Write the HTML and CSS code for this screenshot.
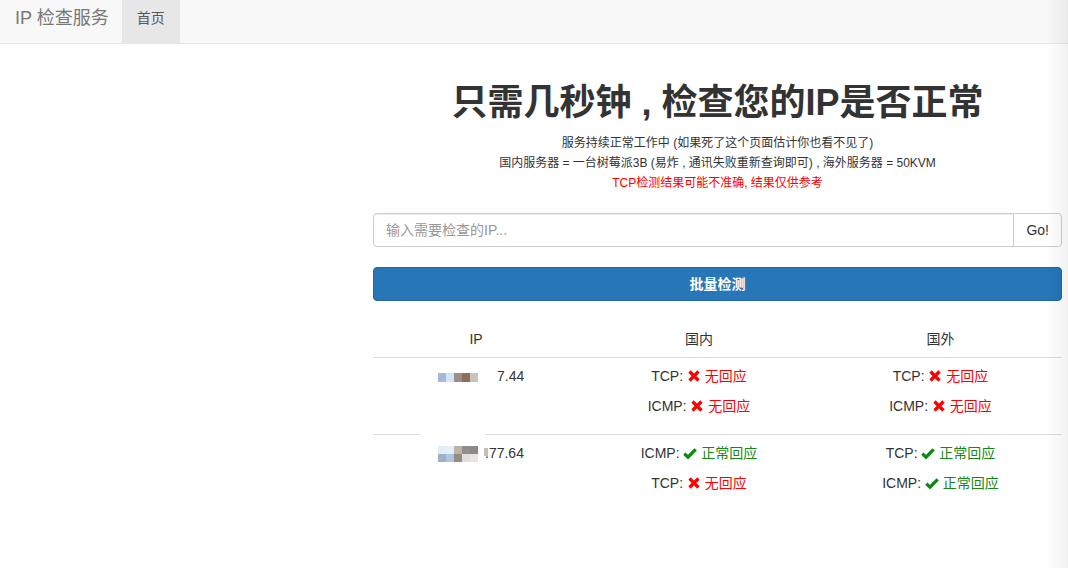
FILE: index.html
```html
<!DOCTYPE html>
<html lang="zh-CN">
<head>
<meta charset="utf-8">
<title>IP 检查服务</title>
<link rel="stylesheet" href="styles.css">
</head>
<body>
<nav class="navbar">
  <a class="brand">IP 检查服务</a>
  <ul class="nav">
    <li class="active"><a>首页</a></li>
  </ul>
</nav>

<main class="page">
  <section class="content">
    <h1 class="title">只需几秒钟 , 检查您的IP是否正常</h1>
    <div class="intro">
      <p>服务持续正常工作中 (如果死了这个页面估计你也看不见了)</p>
      <p>国内服务器 = 一台树莓派3B (易炸 , 通讯失败重新查询即可) , 海外服务器 = 50KVM</p>
      <p class="warn">TCP检测结果可能不准确, 结果仅供参考</p>
    </div>

    <div class="input-group">
      <input class="ip-input" type="text" placeholder="输入需要检查的IP...">
      <button class="go-btn" type="button">Go!</button>
    </div>

    <button class="batch-btn" type="button">批量检测</button>

    <table class="result">
      <colgroup>
        <col class="c-ip"><col class="c-cn"><col class="c-ov">
      </colgroup>
      <thead>
        <tr><th>IP</th><th>国内</th><th>国外</th></tr>
      </thead>
      <tbody>
        <tr>
          <td class="ip">
            <div class="ipcell">
              <span class="mosaic m1">
                <i style="background:#a4b8dc"></i><i style="background:#d4e4f4"></i><i style="background:#9c8e88"></i><i style="background:#8c705c"></i><i style="background:#c8c4bc"></i>
              </span><span class="tail t1">7.44</span>
            </div>
          </td>
          <td>
            <p>TCP: <svg class="ico" viewBox="0 0 14 14"><path class="x" d="M2.5 2.5L11.5 11.5M11.5 2.5L2.5 11.5"/></svg> <span class="bad">无回应</span></p>
            <p>ICMP: <svg class="ico" viewBox="0 0 14 14"><path class="x" d="M2.5 2.5L11.5 11.5M11.5 2.5L2.5 11.5"/></svg> <span class="bad">无回应</span></p>
          </td>
          <td>
            <p>TCP: <svg class="ico" viewBox="0 0 14 14"><path class="x" d="M2.5 2.5L11.5 11.5M11.5 2.5L2.5 11.5"/></svg> <span class="bad">无回应</span></p>
            <p>ICMP: <svg class="ico" viewBox="0 0 14 14"><path class="x" d="M2.5 2.5L11.5 11.5M11.5 2.5L2.5 11.5"/></svg> <span class="bad">无回应</span></p>
          </td>
        </tr>
        <tr>
          <td class="ip">
            <div class="ipcell">
              <span class="cover"></span>
              <span class="mosaic m2">
                <i style="background:#e0eef8"></i><i style="background:#e6eef6"></i><i style="background:#bfb3a8"></i><i style="background:#8e8e8e"></i><i style="background:#8a8a8a"></i>
                <i style="background:#a0b0c8"></i><i style="background:#aac8e4"></i><i style="background:#968a82"></i><i style="background:#e0dede"></i><i style="background:#e8e4de"></i>
              </span><span class="chip"></span><span class="tail">.77.64</span>
            </div>
          </td>
          <td>
            <p>ICMP: <svg class="ico" viewBox="0 0 14 14"><path class="v" d="M1.3 7.6L5 11.2L12.7 3.4"/></svg> <span class="good">正常回应</span></p>
            <p>TCP: <svg class="ico" viewBox="0 0 14 14"><path class="x" d="M2.5 2.5L11.5 11.5M11.5 2.5L2.5 11.5"/></svg> <span class="bad">无回应</span></p>
          </td>
          <td>
            <p>TCP: <svg class="ico" viewBox="0 0 14 14"><path class="v" d="M1.3 7.6L5 11.2L12.7 3.4"/></svg> <span class="good">正常回应</span></p>
            <p>ICMP: <svg class="ico" viewBox="0 0 14 14"><path class="v" d="M1.3 7.6L5 11.2L12.7 3.4"/></svg> <span class="good">正常回应</span></p>
          </td>
        </tr>
      </tbody>
    </table>
  </section>
</main>

<div class="edge-shade"></div>
</body>
</html>
```

FILE: styles.css
```css
* { box-sizing: border-box; }

html, body {
  margin: 0;
  padding: 0;
  background: #fff;
}

body {
  font-family: "Liberation Sans", "Noto Sans CJK SC", sans-serif;
  font-size: 14px;
  line-height: 20px;
  color: #333;
}

/* navbar */
.navbar {
  display: flex;
  align-items: stretch;
  background: #f8f8f8;
  border-bottom: 1px solid #e7e7e7;
  height: 44px;
}

.brand {
  display: block;
  padding: 8px 13px 15px 15px;
  font-size: 18px;
  line-height: 20px;
  color: #777;
}

.nav {
  display: flex;
  list-style: none;
  margin: 0;
  padding: 0;
}

.nav li a {
  display: block;
  padding: 8px 15px 15px;
  line-height: 20px;
  color: #555;
}

.nav li.active a {
  background: #e7e7e7;
}

/* page */
.page {
  display: grid;
  grid-template-columns: 373px 689px;
}

.content {
  grid-column: 2;
  padding-top: 39px;
  text-align: center;
}

.title {
  margin: 0 0 10px;
  font-size: 36px;
  line-height: 40px;
  font-weight: 700;
  color: #333;
}

.intro p {
  margin: 0;
  font-size: 12px;
  line-height: 20px;
}

.intro .warn {
  color: #ff0000;
}

/* input */
.input-group {
  display: flex;
  margin-top: 20px;
  height: 34px;
}

.ip-input {
  flex: 1;
  min-width: 0;
  height: 34px;
  padding: 6px 12px;
  border: 1px solid #ccc;
  border-radius: 4px 0 0 4px;
  font: inherit;
  color: #555;
  box-shadow: inset 0 1px 1px rgba(0,0,0,.075);
  outline: none;
}

.ip-input::placeholder {
  color: #999;
}

.go-btn {
  height: 34px;
  padding: 6px 12px;
  margin-left: -1px;
  border: 1px solid #ccc;
  border-radius: 0 4px 4px 0;
  background: #fff;
  font: inherit;
  color: #333;
}

.batch-btn {
  display: block;
  width: 100%;
  height: 34px;
  margin-top: 20px;
  border: 1px solid #2567a6;
  border-radius: 4px;
  background: #2676b8;
  color: #fff;
  font: inherit;
  font-weight: 700;
}

/* table */
.result {
  width: 689px;
  margin-top: 20px;
  border-collapse: collapse;
  table-layout: fixed;
}

.c-ip { width: 206px; }
.c-cn { width: 240px; }
.c-ov { width: 243px; }

.result th {
  padding: 8px;
  font-weight: 400;
  line-height: 20px;
  border-bottom: 1px solid #ddd;
  text-align: center;
}

.result td {
  padding: 8px;
  border-top: 1px solid #ddd;
  vertical-align: top;
  text-align: center;
}

.result td p {
  margin: 0 0 10px;
  line-height: 20px;
}

.result td.ip {
  text-align: left;
  padding-left: 65px;
}

.ipcell {
  position: relative;
  height: 20px;
  white-space: nowrap;
}

.mosaic {
  display: inline-grid;
  grid-template-columns: repeat(5, 8px);
  vertical-align: middle;
}

.mosaic i {
  display: block;
}

.m1 i { height: 9px; }
.m2 i { height: 8px; }

.m1 { margin-right: 19px; }
.m2 { margin-right: 6px; }

.chip {
  display: inline-block;
  width: 4px;
  height: 8px;
  margin-right: -3px;
  background: #c8bdb0;
  vertical-align: 2px;
}

.cover {
  position: absolute;
  left: -18px;
  top: -13px;
  width: 65px;
  height: 12px;
  background: #fff;
}

.ico {
  width: 14px;
  height: 14px;
  vertical-align: -2px;
}

.ico .x {
  fill: none;
  stroke: #ff0000;
  stroke-width: 3.3;
}

.ico .v {
  fill: none;
  stroke: #0a8a0a;
  stroke-width: 3.2;
}

.bad { color: #ff0000; }
.good { color: #158815; }

.edge-shade {
  position: fixed;
  top: 0;
  right: 0;
  bottom: 0;
  width: 22px;
  background: linear-gradient(to right, rgba(0,0,0,0), rgba(0,0,0,0.055));
  pointer-events: none;
}
```
